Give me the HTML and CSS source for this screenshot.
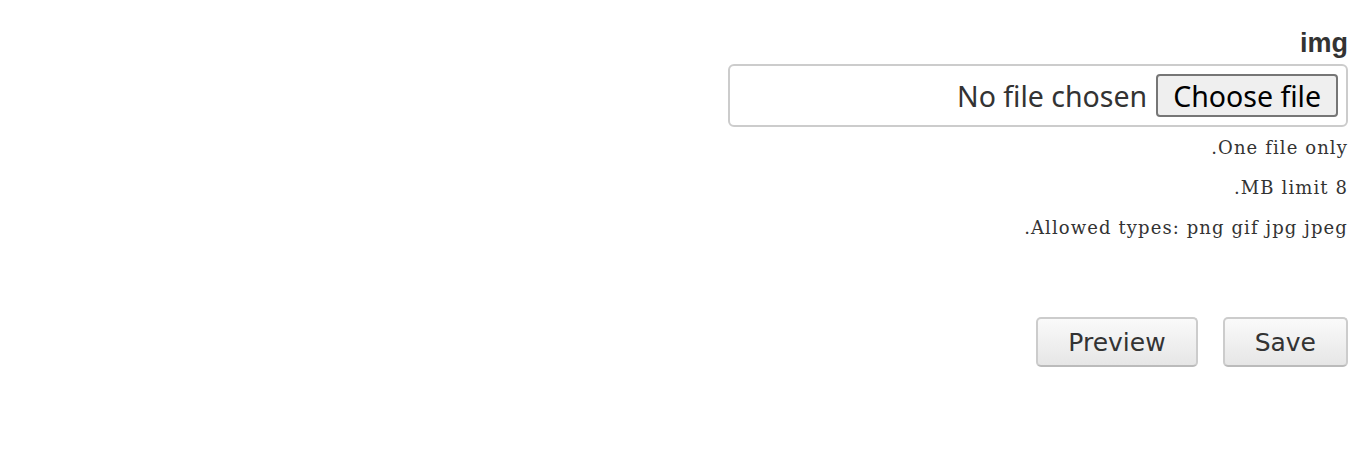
FILE: index.html
```html
<!DOCTYPE html>
<html lang="en" dir="rtl">
<head>
<meta charset="utf-8">
<title>img</title>
<link rel="stylesheet" href="styles.css">
</head>
<body>
<form class="form">
  <div class="field">
    <label class="field-label">img</label>
    <div class="file-box">
      <span class="file-btn">Choose file</span>
      <span class="file-status">No file chosen</span>
    </div>
    <div class="desc">
      <div class="desc-line">One file only.</div>
      <div class="desc-line">8 MB limit.</div>
      <div class="desc-line">Allowed types: png gif jpg jpeg.</div>
    </div>
  </div>
  <div class="actions">
    <span class="btn">Save</span>
    <span class="btn">Preview</span>
  </div>
</form>
</body>
</html>
```
FILE: styles.css
```css
html, body {
  margin: 0;
  padding: 0;
  background: #ffffff;
}
body {
  direction: rtl;
  color: #333333;
}
.form {
  display: flex;
  flex-direction: column;
  align-items: flex-start;
  padding: 27px 24px 0 0;
}
.field {
  width: 620px;
  display: flex;
  flex-direction: column;
}
.field-label {
  font-family: "Liberation Sans", Arial, sans-serif;
  font-weight: bold;
  font-size: 27px;
  line-height: 33px;
  color: #333333;
  margin-bottom: 4px;
}
.file-box {
  box-sizing: border-box;
  height: 63px;
  border: 2px solid #cccccc;
  border-radius: 6px;
  display: flex;
  align-items: center;
  padding: 0 8px;
  gap: 9px;
}
.file-btn {
  box-sizing: border-box;
  height: 43px;
  display: flex;
  align-items: center;
  padding: 0 15px;
  border: 2px solid #767676;
  border-radius: 4px;
  background: #efefef;
  color: #000000;
  font-family: "Noto Sans", "Open Sans", sans-serif;
  font-size: 28.5px;
}
.file-status {
  font-family: "Noto Sans", "Open Sans", sans-serif;
  font-size: 28.5px;
  color: #333333;
}
.desc {
  margin-top: 1px;
  font-family: "DejaVu Serif", Georgia, serif;
  font-size: 18px;
  letter-spacing: 1.1px;
  color: #333333;
}
.desc-line {
  line-height: 40px;
}
.actions {
  margin-top: 69px;
  display: flex;
  gap: 25px;
}
.btn {
  box-sizing: border-box;
  height: 50px;
  display: flex;
  align-items: center;
  padding: 0 30px;
  border: 2px solid #cccccc;
  border-bottom-color: #bbbbbb;
  border-radius: 5px;
  background: linear-gradient(#fafafa, #e6e6e6);
  font-family: "DejaVu Sans", "Lucida Grande", sans-serif;
  font-size: 25px;
  color: #333333;
}
```
